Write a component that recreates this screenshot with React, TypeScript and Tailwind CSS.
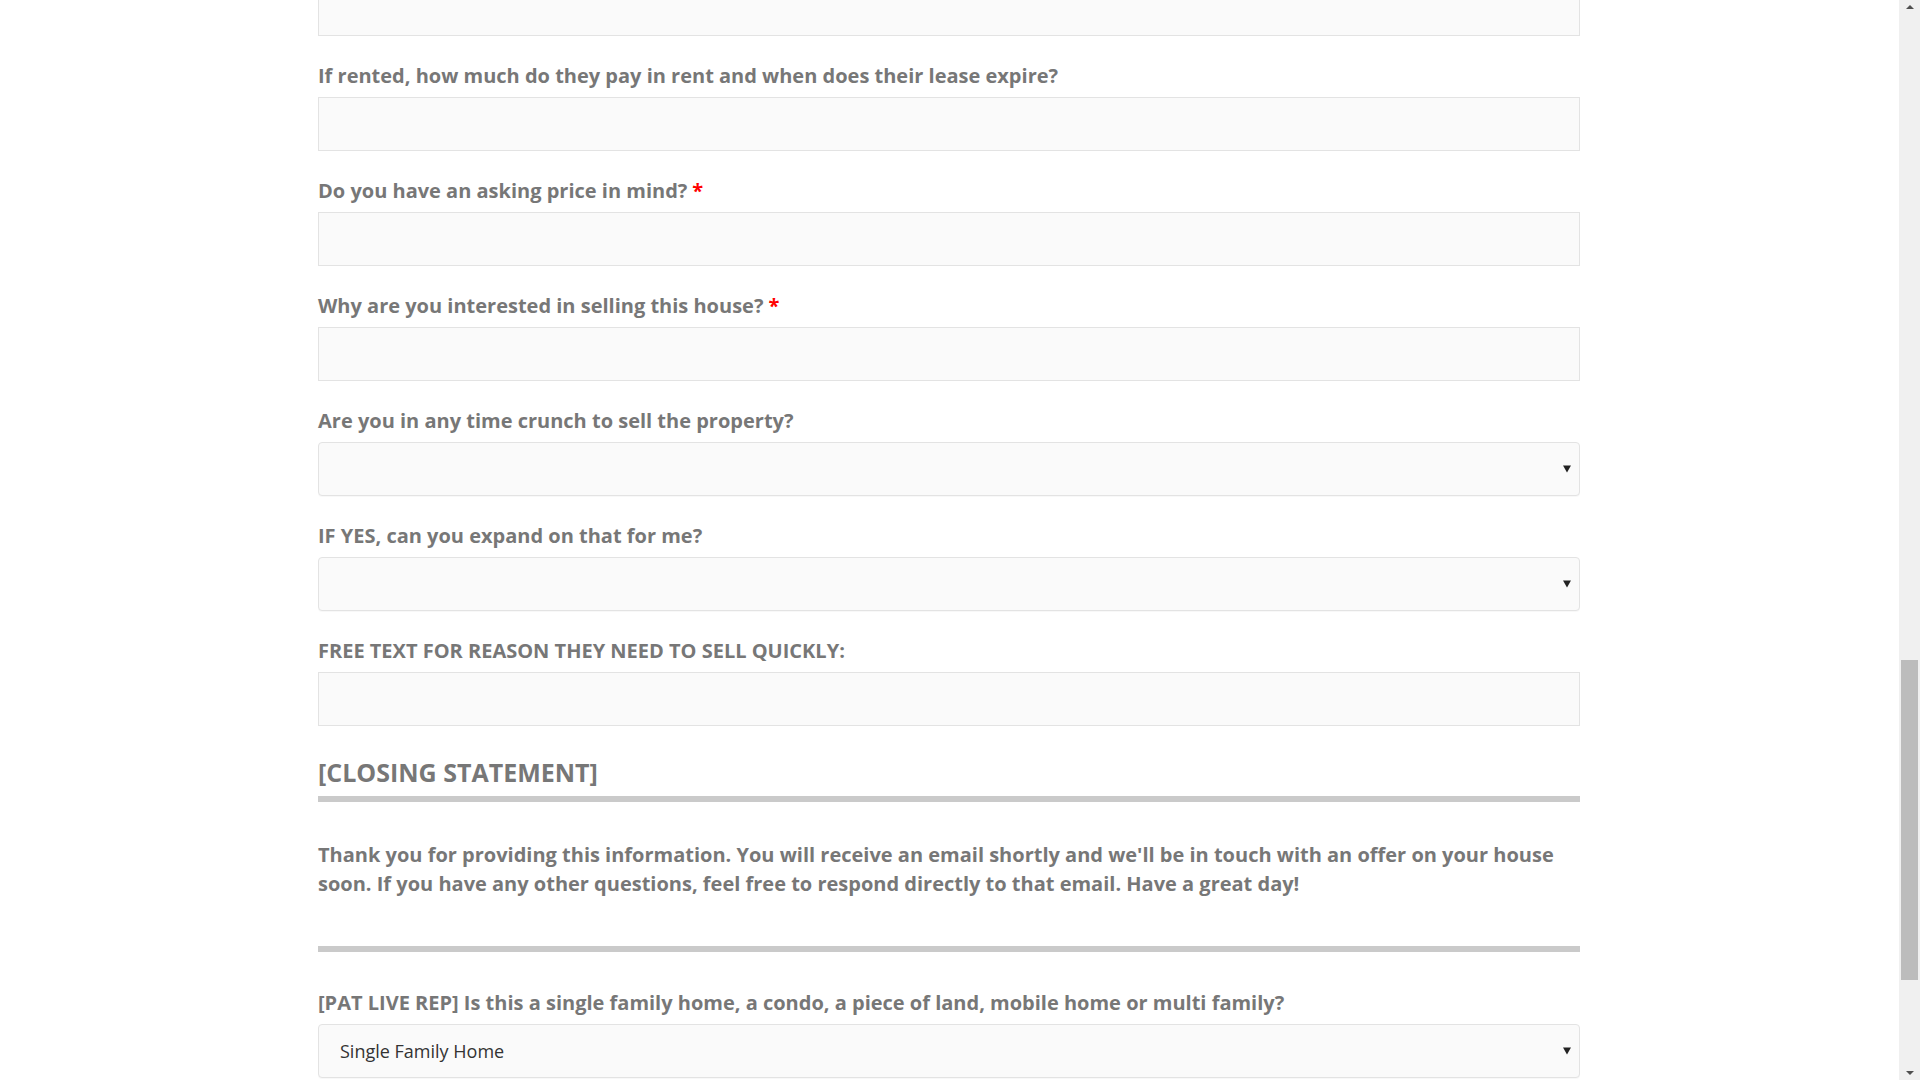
import React from 'react';

const font = { fontFamily: '"Open Sans", "Liberation Sans", sans-serif' };

function Label({ text, required }: { text: string; required?: boolean }) {
  return (
    <label className="block text-[20px] leading-[30px] font-bold text-[#777] mb-[6px]">
      {text}
      {required && <span className="text-[#ff0000] ml-[5px]">*</span>}
    </label>
  );
}

function TextField({ label, required }: { label: string; required?: boolean }) {
  return (
    <div className="mb-[25px]">
      <Label text={label} required={required} />
      <input
        type="text"
        className="block w-full h-[54px] border border-[#e3e3e3] bg-[#fafafa] outline-none px-4"
      />
    </div>
  );
}

function SelectField({ label, value, mb = 'mb-[25px]' }: { label: string; value?: string; mb?: string }) {
  return (
    <div className={mb}>
      <Label text={label} />
      <div className="relative">
        <select
          defaultValue={value ?? ''}
          className="block w-full h-[54px] appearance-none rounded-[4px] border border-[#e3e3e3] bg-[#fafafa] pl-[21px] text-[18px] text-[#333] outline-none shadow-[0_1px_1px_rgba(0,0,0,0.03)]"
          style={font}
        >
          <option value=""></option>
          <option value="Single Family Home">Single Family Home</option>
        </select>
        <span className="pointer-events-none absolute right-[9px] top-1/2 -translate-y-1/2 w-0 h-0 border-l-[4px] border-r-[4px] border-t-[7px] border-l-transparent border-r-transparent border-t-[#222]" />
      </div>
    </div>
  );
}

export default function App() {
  return (
    <div className="h-[1080px] w-[1920px] overflow-hidden flex bg-white" style={font}>
      <div className="flex-1 overflow-hidden">
        <div className="ml-[318px] w-[1262px] flex flex-col">
          <div className="h-[36px] border-x border-b border-[#e3e3e3] bg-[#fafafa] mb-[25px]" />

          <TextField label="If rented, how much do they pay in rent and when does their lease expire?" />
          <TextField label="Do you have an asking price in mind?" required />
          <TextField label="Why are you interested in selling this house?" required />
          <SelectField label="Are you in any time crunch to sell the property?" />
          <SelectField label="IF YES, can you expand on that for me?" />
          <TextField label="FREE TEXT FOR REASON THEY NEED TO SELL QUICKLY:" />

          <h2 className="mt-[3px] text-[25px] leading-[36px] font-bold text-[#777]">[CLOSING STATEMENT]</h2>
          <div className="mt-[6px] h-[6px] bg-[#cacaca]" />

          <p className="mt-[38px] text-[20px] leading-[29px] font-bold text-[#777]">
            Thank you for providing this information. You will receive an email shortly and we'll be in touch with an offer on your house soon. If you have any other questions, feel free to respond directly to that email. Have a great day!
          </p>
          <div className="mt-[48px] h-[6px] bg-[#cacaca] mb-[36px]" />

          <SelectField
            label="[PAT LIVE REP] Is this a single family home, a condo, a piece of land, mobile home or multi family?"
            value="Single Family Home"
            mb="mb-0"
          />
        </div>
      </div>

      <div className="w-[21px] h-full bg-[#f0f0f0] flex flex-col items-center">
        <div className="h-[14px] w-full flex items-center justify-center">
          <span className="w-0 h-0 border-l-[4px] border-r-[4px] border-b-[4px] border-l-transparent border-r-transparent border-b-[#505050]" />
        </div>
        <div className="flex-1 w-full flex flex-col">
          <div className="h-[646px]" />
          <div className="ml-[2px] w-[17px] h-[320px] bg-[#bcbcbc]" />
        </div>
        <div className="h-[14px] w-full flex items-center justify-center">
          <span className="w-0 h-0 border-l-[4px] border-r-[4px] border-t-[4px] border-l-transparent border-r-transparent border-t-[#505050]" />
        </div>
      </div>
    </div>
  );
}
